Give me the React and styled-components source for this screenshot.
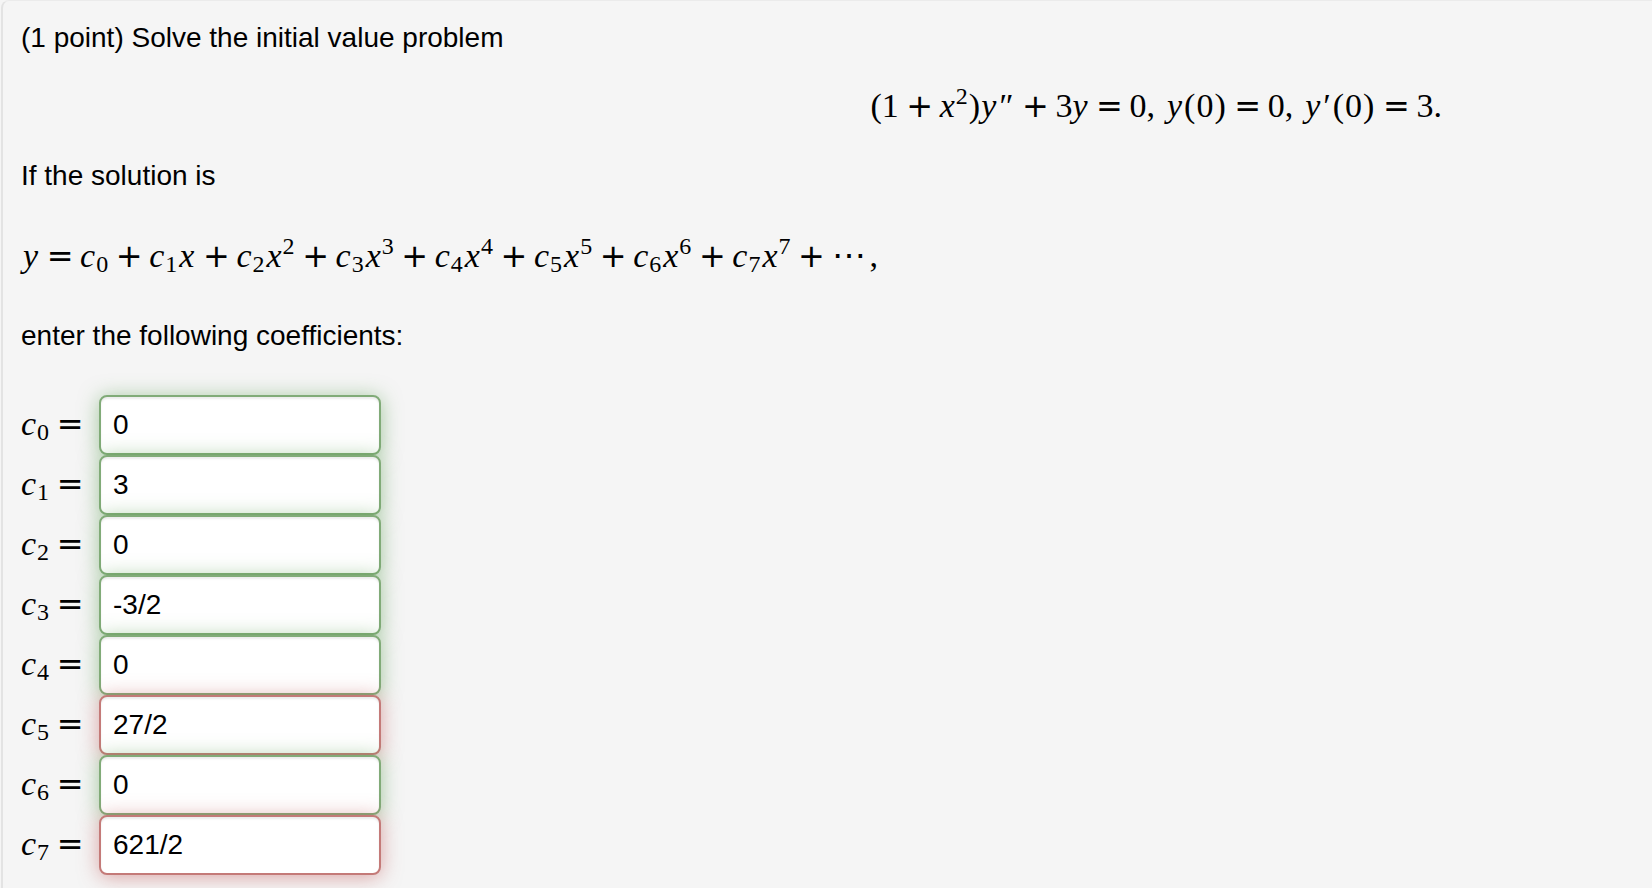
import React from 'react'
import styled, { createGlobalStyle } from 'styled-components';


const series = [2, 3, 4, 5, 6, 7];

const answers = [
    { value: '0', correct: true },
    { value: '3', correct: true },
    { value: '0', correct: true },
    { value: '-3/2', correct: true },
    { value: '0', correct: true },
    { value: '27/2', correct: false },
    { value: '0', correct: true },
    { value: '621/2', correct: false },
];

function Coefficient({ index }) {
    return <><Var>c</Var><Sub>{index}</Sub></>
}

function App() {
    return (
        <>
            <GlobalStyle />
            <Problem>
                <Text>(1 point) Solve the initial value problem</Text>
                {/* Differential equation */}
                <DisplayMath>
                    (1<Op>+</Op><Var>x</Var><Sup>2</Sup><Paren>)</Paren><Var>y</Var><Prime>″</Prime>
                    <Op>+</Op>3<Var>y</Var><Op>=</Op>0<Comma>,</Comma>
                    <Var>y</Var><Paren>(</Paren>0<Paren>)</Paren><Op>=</Op>0<Comma>,</Comma>
                    <Var>y</Var><Prime>′</Prime><Paren>(</Paren>0<Paren>)</Paren><Op>=</Op>3.
                </DisplayMath>
                <Text>If the solution is</Text>
                {/* Power series */}
                <SeriesMath>
                    <Var $wide>y</Var><Op>=</Op><Coefficient index={0} /><Op>+</Op><Coefficient index={1} /><Var $wide>x</Var>
                    {series.map((n) => (
                        <React.Fragment key={n}>
                            <Op>+</Op><Coefficient index={n} /><Var $wide>x</Var><Sup>{n}</Sup>
                        </React.Fragment>
                    ))}
                    <Op>+</Op><Dots>⋯</Dots>,
                </SeriesMath>
                <Text>enter the following coefficients:</Text>
                {/* Answer blanks */}
                <Answers>
                    {answers.map((answer, n) => (
                        <AnswerRow key={n}>
                            <Label htmlFor={`c${n}`}><Coefficient index={n} /><Op>=</Op></Label>
                            <AnswerInput id={`c${n}`} type="text" defaultValue={answer.value} $correct={answer.correct} />
                        </AnswerRow>
                    ))}
                </Answers>
            </Problem>
        </>
    )
}
export default App;

const GlobalStyle = createGlobalStyle`
*{
    box-sizing:border-box;
}
body{
    margin:0;
    background:#f5f5f5;
    color:#000;
    overflow-x:hidden;
}
`;

//Problem panel
const Problem = styled.main`
margin-left:1px;
padding:17px 18px 13px;
border:solid #e3e3e3;
border-width:1px 0 0 2px;
border-top-color:#ebebeb;
border-top-left-radius:8px;
background:#f5f5f5;
font-family:"Liberation Sans",Arial,sans-serif;
font-size:28px;
line-height:40px;
`;

const Text = styled.p`
margin:0;
`;

//Math
const Math = styled.div`
display:flex;
align-items:baseline;
font-family:"Liberation Serif","Times New Roman",serif;
font-size:34px;
line-height:40px;
white-space:nowrap;
`;

const DisplayMath = styled(Math)`
justify-content:center;
padding:28px 4px 30px 41%;
`;

const SeriesMath = styled(Math)`
padding:40px 0;
`;

const Var = styled.i`
padding:${(props) => (props.$wide ? '0 1px 0 2px' : '0 1px 0 0')};
`;

const Op = styled.span`
width:22px;
margin:0 9px 0 10px;
font-family:"DejaVu Sans",sans-serif;
font-size:32px;
line-height:1;
display:flex;
justify-content:center;
`;

const Sub = styled.span`
position:relative;
top:5px;
font-size:24px;
line-height:1;
`;

const Sup = styled.span`
position:relative;
top:-13px;
font-size:24px;
line-height:1;
`;

const Prime = styled.span`
padding-right:3px;
font-style:italic;
`;

const Paren = styled.span`
padding:0 1px;
`;

const Comma = styled.span`
padding-right:12px;
`;

const Dots = styled.span`
padding-right:4px;
`;

//Answer blanks
const Answers = styled.div`
padding-top:39px;
`;

const AnswerRow = styled.div`
display:flex;
align-items:center;
`;

const Label = styled.label`
display:flex;
align-items:baseline;
width:78px;
padding-bottom:3px;
font-family:"Liberation Serif","Times New Roman",serif;
font-size:34px;
`;

const AnswerInput = styled.input`
width:282px;
height:60px;
padding:0 12px;
border:2px solid ${(props) => (props.$correct ? '#81ab78' : '#c47a78')};
border-radius:8px;
outline:none;
background:#fff;
box-shadow:inset 0 2px 2px rgba(0,0,0,0.08),0 2px 20px ${(props) => (props.$correct ? 'rgba(81,153,71,0.5)' : 'rgba(191,84,84,0.5)')};
color:#000;
font-family:inherit;
font-size:28px;
`;
